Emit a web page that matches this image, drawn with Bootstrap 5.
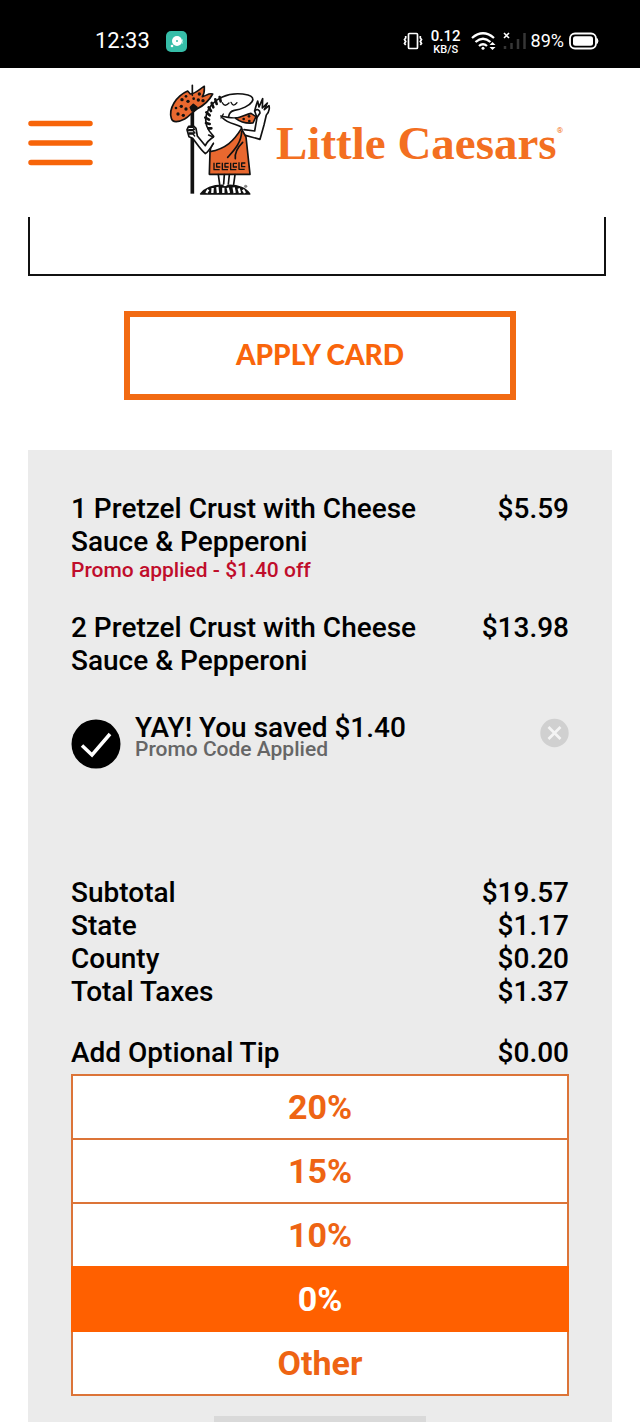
<!DOCTYPE html>
<html lang="en">
<head>
<meta charset="utf-8">
<meta name="viewport" content="width=device-width, initial-scale=1">
<title>Little Caesars - Checkout</title>
<link href="https://cdn.jsdelivr.net/npm/bootstrap@5.3.0/dist/css/bootstrap.min.css" rel="stylesheet">
<style>
:root{--lc-orange:#ff6000;--lc-line:#dc7438}
body{font-family:Roboto,"Liberation Sans",sans-serif;font-size:28px;line-height:33px;font-weight:400;color:#000;background:#fff}
svg{display:block;flex:none}
.status-bar{height:68px;padding:14px 40px 0 95px;background:#000;color:#fff;font-size:22px;line-height:54px}
.status-bar .rate{margin-top:16px;margin-right:10px;font-size:15px;line-height:12px;font-weight:500;text-align:center}
.status-bar .rate span{font-size:11px}
.status-bar .level{font-size:18px}
.status-icon{margin-top:17px}
.site-header{padding:7px 28px 17px}
.menu-btn{padding:0;margin-top:45px;border:0;background:none}
.brand-link{margin-left:67px;color:#f36f21;text-decoration:none}
.brand-name{font:700 47px/56px "Liberation Serif",serif;padding-top:40px;margin-left:-4px;white-space:nowrap}
.brand-name sup{font:8px/8px Roboto,sans-serif;top:-26px}
.page-body{padding:0 28px}
.card-number{height:59px;border:2px solid #111;border-top:0;border-radius:0;margin-right:6px;width:auto;flex:1}
.apply-btn{width:67%;height:89px;margin:35px auto 50px;padding:4px 12px 8px;border:6px solid #f26a12;border-radius:0;color:#f9650b;background:#fff;font:900 28px/34px Lato,sans-serif}
.order-box{padding:42px 43px 26px;background:#ebebeb;font-weight:500}
.line-item{margin-bottom:29px}
.promo-note{font-size:21px;line-height:24px;color:#c00d2b}
.saved-row{margin:39px 0 107px}
.saved-text{margin-left:14px}
.saved-title{line-height:24px}
.saved-sub{font-size:21px;line-height:18px;color:#666}
.clear-btn{padding:0;border:0;background:none}
.totals{width:100%;margin-bottom:28px}
.totals th,.totals td{padding:0;font-weight:500}
.tips{margin-top:7px}
.tips .btn{--bs-btn-color:#ee6413;--bs-btn-bg:#fff;--bs-btn-border-color:var(--lc-line);--bs-btn-border-width:2px;--bs-btn-border-radius:0;--bs-btn-hover-color:#ee6413;--bs-btn-hover-bg:#fff;--bs-btn-active-bg:var(--lc-orange);--bs-btn-active-border-color:var(--lc-orange);--bs-btn-active-color:#fff;--bs-btn-font-weight:700;--bs-btn-font-size:34px;--bs-btn-line-height:36px;--bs-btn-padding-y:13px;height:66px}
.tips>.btn:not(:first-child){margin-top:-2px}
.home-bar{position:fixed;bottom:0;left:50%;width:212px;height:6px;margin-left:-106px;background:#d9d9d9}
</style>
</head>
<body>
<div class="status-bar d-flex">
  <span>12:33</span>
  <svg class="status-icon ms-3" width="21" height="21" viewBox="0 0 21 21"><rect width="21" height="21" rx="5" fill="#36bda8"/><circle cx="11" cy="10" r="5" fill="#fff"/><circle cx="11" cy="10" r="1" fill="#36bda8"/><circle cx="6" cy="15" r="1.3" fill="#fff"/><path d="M16 8q1.500 2 0 5" stroke="#9fe5db" fill="none"/></svg>
  <div class="ms-auto d-flex align-items-start">
    <svg class="status-icon me-2" width="20" height="20" viewBox="0 0 20 20" fill="none" stroke="#fff" stroke-width="1.700"><rect x="5.500" y="2.500" width="9" height="15" rx="1"/><path d="M2.700 5v2L1.500 8.500l1.200 2-1.200 2 1.200 1.500M17.300 5v2l1.200 1.500-1.200 2 1.200 2-1.200 1.500"/></svg>
    <div class="rate">0.12<br><span>KB/S</span></div>
    <svg class="status-icon" width="32" height="20" viewBox="0 0 32 20" fill="none" stroke="#fff" stroke-width="2.300"><path d="M1 7q11-9.500 22 0M4.500 11q7.500-6.500 15 0M8 15q4-3.500 8 0"/><circle cx="12" cy="17.300" r="1.500" fill="#fff" stroke="none"/><path d="M18.500 14L21.500 11l3 3zM18.500 16L21.500 19l3-3z" fill="#fff" stroke="none"/></svg>
    <svg class="status-icon" width="24" height="20" viewBox="0 0 24 20"><path d="M1 2l5 5M6 2L1 7" stroke="#fff" stroke-width="1.600"/><path d="M2 15v3M8.500 12v6M15 8v10M21.500 2v16" stroke="#363636" stroke-width="2.500"/></svg>
    <span class="level ms-1">89%</span>
    <svg class="status-icon ms-1" width="32" height="20" viewBox="0 0 32 20"><rect x="2" y="2.500" width="26" height="15" rx="5" fill="none" stroke="#fff" stroke-width="1.800"/><rect x="5" y="5.300" width="20" height="9.400" rx="2.500" fill="#fff"/><path d="M29 7.500q2 2.500 0 5z" fill="#fff" stroke="#fff"/></svg>
  </div>
</div>

<header class="site-header d-flex align-items-start">
  <button class="menu-btn" type="button" aria-label="Menu">
    <svg width="65" height="46" viewBox="0 0 65 46" stroke="#f76409" stroke-width="5.500" stroke-linecap="round"><path d="M3 3.500h59M3 23h59M3 42.500h59"/></svg>
  </button>
  <a href="#" class="brand-link d-flex align-items-start">
    <svg width="120" height="125" viewBox="0 0 360 375" fill="none" stroke="#111" stroke-width="5" stroke-linejoin="round" stroke-linecap="round">
      <!-- spear -->
      <path d="M97 92V356" stroke-width="11" stroke-linecap="butt"/>
      <path d="M83 48C48 63 25 102 34 130C38 145 56 141 74 132C89 124 97 110 112 101C132 91 149 74 158 57C145 53 139 63 127 65C136 53 132 40 133 34C120 41 105 57 91 57Z" fill="#e9682f"/>
      <path d="M97 31V61M100 88L91 97L96 108H102L111 97Z" fill="#111"/>
      <g fill="#111" stroke="none"><circle cx="66" cy="74" r="5"/><circle cx="78" cy="64" r="4"/><circle cx="84" cy="79" r="5"/><circle cx="64" cy="94" r="5"/><circle cx="48" cy="99" r="4"/><circle cx="78" cy="102" r="5"/><circle cx="54" cy="117" r="5"/><circle cx="70" cy="121" r="5"/><circle cx="118" cy="57" r="5"/><circle cx="115" cy="75" r="5"/><circle cx="129" cy="77" r="5"/><circle cx="101" cy="71" r="4"/></g>
      <!-- raised arm -->
      <path d="M256 181L300 193L312 150L319 120C330 110 328 95 327 92L313 104L322 84L307 99L308 71L297 96L293 78C288 90 287 98 284 108L291 128L284 168L252 164" fill="#fff"/>
      <path d="M284 108C290 100 300 104 300 114L292 126"/>
      <!-- head and chest -->
      <path d="M187 66C207 57 238 54 264 60C277 63 282 71 276 80C268 92 246 103 223 106C212 108 204 115 201 124C210 142 230 148 244 156L242 170L150 230L160 184C143 166 132 145 139 120C146 96 164 76 187 66Z" fill="#fff" stroke="none"/>
      <path d="M161 184C143 166 132 145 139 120C146 96 164 76 187 66C207 57 238 54 264 60C277 63 282 71 276 80C268 92 246 103 223 106C214 108 208 112 206 124M188 129C203 145 228 147 244 156L246 164M160 205Q151 217 150 230"/>
      <path d="M187 83Q194 98 207 84M213 82Q220 98 231 83M182 123C200 127 215 130 230 128M190 117L183 129" stroke-width="4"/>
      <path d="M227 130C245 127 258 118 273 115L288 125L279 144C258 146 241 141 227 130Z" fill="#e9682f"/>
      <g fill="#111" stroke="none"><circle cx="251" cy="132" r="4"/><circle cx="267" cy="124" r="4"/><circle cx="268" cy="138" r="4"/></g>
      <!-- laurel wreath -->
      <path d="M179 66L182 79M166 73L170 87M155 84L160 97M146 97L153 108M139 112L149 121M136 128L147 134M138 144L149 147M145 160L154 160" stroke-width="8"/>
      <!-- left arm -->
      <path d="M160 186C148 194 139 205 136 212L112 183L108 160L101 153L86 154L81 164L87 185L98 190C110 205 121 224 136 236C145 230 153 217 160 205" fill="#fff"/>
      <path d="M84 157H99L104 164H86M83 167H99L105 174H87M88 177H99L104 183" stroke-width="4"/>
      <path d="M160 186L146 180"/>
      <!-- toga -->
      <path d="M150 230C198 221 222 197 244 161L258 186L270 298H148Z" fill="#e9682f"/>
      <path d="M245 170C244 204 220 228 203 247M248 202C235 215 224 235 226 251"/>
      <path d="M162 263V284H179M181 265H170V276H181M187 263V284H204M206 265H195V276H206M212 263V284H229M231 265H220V276H231M237 262V283H254M256 264H245V275H256" stroke-width="4" stroke-linecap="butt"/>
      <!-- legs and sandals -->
      <path d="M175 299L179 328M193 299L191 327M208 299L205 327M225 299L221 328"/>
      <path d="M122 357C137 338 165 331 187 331Q194 341 205 331C235 330 259 341 269 357Z" fill="#111"/>
      <path d="M139 354L145 344M157 354L158 339M174 354L172 336M190 354L190 338M207 354L203 338M224 354L221 337M240 354L236 340M255 354L249 344" stroke="#fff" stroke-width="7" stroke-linecap="butt"/>
      <circle cx="257" cy="334" r="4" fill="#888" stroke="#666" stroke-width="1"/>
    </svg>
    <span class="brand-name">Little Caesars<sup>®</sup></span>
  </a>
</header>

<main class="page-body">
  <form>
    <div class="d-flex"><input class="form-control card-number" type="text" aria-label="Gift card number"></div>
    <button class="btn apply-btn d-block" type="button">APPLY CARD</button>
  </form>

  <section class="order-box">
    <div class="line-item d-flex justify-content-between gap-5">
      <div>1 Pretzel Crust with Cheese<br>Sauce &amp; Pepperoni<div class="promo-note">Promo applied - $1.40 off</div></div>
      <div>$5.59</div>
    </div>
    <div class="line-item d-flex justify-content-between gap-5">
      <div>2 Pretzel Crust with Cheese<br>Sauce &amp; Pepperoni</div>
      <div>$13.98</div>
    </div>
    <div class="saved-row d-flex align-items-start">
      <svg width="50" height="53" viewBox="0 0 50 53"><circle cx="25" cy="28" r="24.500"/><path d="M11 29.500L21 39L39 18" fill="none" stroke="#fff" stroke-width="3.500"/></svg>
      <div class="saved-text flex-grow-1">
        <div class="saved-title">YAY! You saved $1.40</div>
        <div class="saved-sub">Promo Code Applied</div>
      </div>
      <button class="clear-btn" type="button" aria-label="Remove promo code">
        <svg width="29" height="33" viewBox="0 0 29 33"><circle cx="14.500" cy="17" r="14.200" fill="#d0d0d0"/><path d="M8.500 11l12 12M20.500 11l-12 12" stroke="#f4f4f4" stroke-width="2.700"/></svg>
      </button>
    </div>
    <table class="totals">
      <tbody>
        <tr><th scope="row">Subtotal</th><td class="text-end">$19.57</td></tr>
        <tr><th scope="row">State</th><td class="text-end">$1.17</td></tr>
        <tr><th scope="row">County</th><td class="text-end">$0.20</td></tr>
        <tr><th scope="row">Total Taxes</th><td class="text-end">$1.37</td></tr>
      </tbody>
    </table>
    <div class="d-flex justify-content-between"><span id="tip-title">Add Optional Tip</span><span>$0.00</span></div>
    <div class="tips btn-group-vertical w-100" role="group" aria-labelledby="tip-title">
      <input class="btn-check" type="radio" name="tip" id="tip20"><label class="btn" for="tip20">20%</label>
      <input class="btn-check" type="radio" name="tip" id="tip15"><label class="btn" for="tip15">15%</label>
      <input class="btn-check" type="radio" name="tip" id="tip10"><label class="btn" for="tip10">10%</label>
      <input class="btn-check" type="radio" name="tip" id="tip0" checked><label class="btn" for="tip0">0%</label>
      <input class="btn-check" type="radio" name="tip" id="tipOther"><label class="btn" for="tipOther">Other</label>
    </div>
  </section>
</main>
<div class="home-bar"></div>
<script src="https://cdn.jsdelivr.net/npm/bootstrap@5.3.0/dist/js/bootstrap.bundle.min.js"></script>
</body>
</html>
